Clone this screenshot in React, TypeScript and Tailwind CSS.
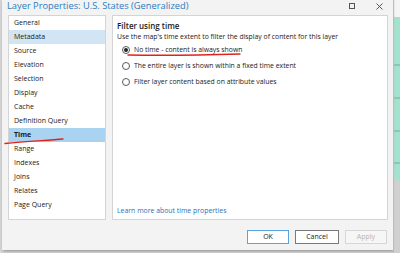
import { useState } from "react";

const pages = [
  "General",
  "Metadata",
  "Source",
  "Elevation",
  "Selection",
  "Display",
  "Cache",
  "Definition Query",
  "Time",
  "Range",
  "Indexes",
  "Joins",
  "Relates",
  "Page Query",
];

const options = [
  "No time - content is always shown",
  "The entire layer is shown within a fixed time extent",
  "Filter layer content based on attribute values",
];

function Radio({ checked }: { checked: boolean }) {
  return (
    <span className="flex h-[8px] w-[8px] shrink-0 items-center justify-center rounded-full border border-[#5a5a5a] bg-white">
      {checked && <span className="h-[4px] w-[4px] rounded-full bg-[#222]" />}
    </span>
  );
}

export default function App() {
  const [page] = useState("Time");
  const [choice, setChoice] = useState(0);

  return (
    <div
      className="relative flex h-[253px] w-[400px] overflow-hidden bg-[#d6d6d6] pl-[2px] text-[#1a1a1a]"
      style={{ fontFamily: '"Open Sans", "Noto Sans", sans-serif' }}
    >
      <div className="flex h-[250px] w-[391px] shrink-0 flex-col bg-[#f3f3f3] shadow-[1px_1px_3px_rgba(0,0,0,0.35)]">
        {/* title bar */}
        <div className="flex h-[15px] items-start pl-[5px] pr-[10px]">
          <span className="text-[9.3px] leading-[12px] text-[#2b7cc0]">
            Layer Properties: U.S. States (Generalized)
          </span>
          <div className="ml-auto mt-[3px] flex items-start gap-[21px]">
            <span className="block h-[6px] w-[6px] border border-[#555]" />
            <svg width="7" height="7" viewBox="0 0 7 7" className="block">
              <path d="M0.5 0.5L6.5 6.5M6.5 0.5L0.5 6.5" stroke="#444" strokeWidth="0.9" />
            </svg>
          </div>
        </div>

        {/* body */}
        <div className="flex h-[205px] gap-[6px] px-[6px] pr-[5px]">
          <ul className="w-[98px] border border-[#d4d4d4] bg-white">
            {pages.map((p) => (
              <li
                key={p}
                className={`flex h-[14px] items-center pl-[5px] text-[7px] ${
                  p === page
                    ? "bg-[#a9d3f1] font-bold"
                    : p === "Metadata"
                      ? "bg-[#d2e5f5]"
                      : ""
                }`}
              >
                {p}
              </li>
            ))}
          </ul>
          <div className="flex flex-1 flex-col border border-[#d4d4d4] bg-white pl-[4px]">
            <div className="mt-[3px] text-[8px] font-semibold leading-[14px]">Filter using time</div>
            <div className="text-[6.85px] leading-[8px]">
              Use the map's time extent to filter the display of content for this layer
            </div>
            <div className="mt-[1px] flex flex-col pl-[5px]">
              {options.map((o, i) => (
                <label
                  key={o}
                  onClick={() => setChoice(i)}
                  className="flex h-[16px] items-center gap-[4px] text-[6.85px]"
                >
                  <Radio checked={choice === i} />
                  {o}
                </label>
              ))}
            </div>
            <a className="mb-[3px] mt-auto text-[6.9px] text-[#2a72b8]">Learn more about time properties</a>
          </div>
        </div>

        {/* buttons */}
        <div className="mt-[10px] flex justify-end gap-[6px] pr-[6px]">
          <button className="h-[14px] w-[42px] border border-[#5aa3dc] bg-white text-[7px]">OK</button>
          <button className="h-[14px] w-[44px] border border-[#7a7a7a] bg-white text-[7px]">Cancel</button>
          <button className="h-[14px] w-[42px] border border-[#d6d6d6] bg-[#f6f6f6] text-[7px] text-[#b5b5b5]">
            Apply
          </button>
        </div>
      </div>

      {/* map behind the dialog */}
      <svg className="flex-1" height="253" viewBox="0 0 7 253" preserveAspectRatio="none">
        <rect x="0" y="0" width="7" height="253" fill="#d0d0d0" />
        <rect x="0" y="0" width="7" height="17" fill="#f4f4f4" />
        <path d="M1 17 H7 V182 Q3 180 1 176 Z" fill="#a3e2cf" />
        <path d="M1 65 H7 M1 98 H7 M1 131 H7 M1 163 H7" stroke="#7b948c" strokeWidth="0.8" />
        <rect x="0" y="0" width="1.2" height="253" fill="#bdbdbd" />
      </svg>

      {/* red annotation strokes */}
      <svg className="pointer-events-none absolute left-0 top-0" width="400" height="253">
        <path d="M5 143.5 C25 141.5 45 140.5 63 139" stroke="#e0221b" strokeWidth="1.4" fill="none" strokeLinecap="round" />
        <path d="M128 55 C160 55.5 205 55 240 54" stroke="#e0221b" strokeWidth="1.4" fill="none" strokeLinecap="round" />
      </svg>
    </div>
  );
}
